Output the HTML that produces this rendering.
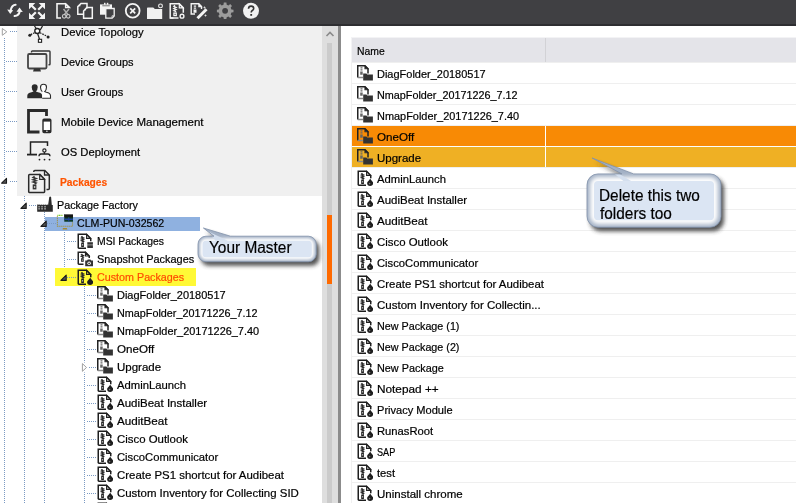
<!DOCTYPE html>
<html><head><meta charset="utf-8"><title>Package Factory</title>
<style>
html,body{margin:0;padding:0;}
body{width:796px;height:503px;overflow:hidden;position:relative;background:#fff;font-family:"Liberation Sans", sans-serif;}
.a{position:absolute;}
.t{position:absolute;white-space:nowrap;line-height:1;-webkit-text-stroke:0.2px currentColor;}
.dv{position:absolute;width:1px;background-image:linear-gradient(#7b9ac3 50%,transparent 50%);background-size:1px 2px;}
.dh{position:absolute;height:1px;background-image:linear-gradient(90deg,#7b9ac3 50%,transparent 50%);background-size:2px 1px;}
svg.i{position:absolute;overflow:visible;}
</style></head><body>


<svg width="0" height="0" style="position:absolute">
<defs>
<symbol id="zipdoc" viewBox="0 0 16 16">
  <path d="M1.25 15.25V1.25H9.5L13.75 5.5V8.3" fill="none" stroke="#1e1e1e" stroke-width="1.5"/>
  <path d="M1.25 15.25H9" fill="none" stroke="#1e1e1e" stroke-width="1.5"/>
  <path d="M9.6 1.6V5.4H13.4Z" fill="#e8e8e8" stroke="#1e1e1e" stroke-width="1.1"/>
  <path d="M5.5 3.2L4.6 4.1L6.5 5L4.6 5.9L6.5 6.8L4.6 7.7L6.5 8.6L5.5 9.4" fill="none" stroke="#2a2a2a" stroke-width="1.4"/>
  <rect x="4.2" y="9.6" width="2.7" height="4.4" fill="#222"/>
  <rect x="5" y="11.3" width="1.1" height="1.1" fill="#ddd"/>
</symbol>
<symbol id="pkgdrop" viewBox="0 0 16 16">
  <use href="#zipdoc"/>
  <path d="M13.2 8.4C12.6 10.1 10.1 11.7 10.1 12.9A3.05 3.05 0 0 0 16.2 12.9C16.2 11.7 13.8 10.1 13.2 8.4Z" fill="#1e1e1e"/>
  <circle cx="12.6" cy="13.6" r="0.8" fill="#777"/>
</symbol>
<symbol id="pkgfolder" viewBox="0 0 16 16">
  <path d="M0.75 12.5V0.75H8L11 3.75V8.5" fill="none" stroke="#222" stroke-width="1.5"/>
  <path d="M0.75 12.5H6" fill="none" stroke="#888" stroke-width="1.5"/>
  <path d="M8 0.9V3.8H10.9Z" fill="#fff" stroke="#222" stroke-width="1.1"/>
  <path d="M3.5 2.3h2v1.2h-2zM3.5 4.3h2v1.2h-2zM3.2 6.5h2.5v3.2h-2.5z" fill="#666"/>
  <path d="M6.2 8.6H9.4L10.2 9.6H15.9V15.6H6.2Z" fill="#333"/>
</symbol>
<symbol id="pkgmsi" viewBox="0 0 16 16">
  <use href="#zipdoc"/>
  <rect x="10.3" y="9.2" width="5.6" height="2.5" fill="#333"/>
  <rect x="10.3" y="12.2" width="5.6" height="2.8" fill="#333"/>
</symbol>
<symbol id="pkgsnap" viewBox="0 0 16 16">
  <path d="M1.25 13.25V1.25H8.5L12.25 5V7" fill="none" stroke="#222" stroke-width="1.5"/>
  <path d="M1.25 13.25H6.5" fill="none" stroke="#222" stroke-width="1.5"/>
  <path d="M8.5 1.5V5H12Z" fill="#fff" stroke="#222" stroke-width="1.2"/>
  <path d="M5.4 3L4.5 3.8L6.3 4.6L4.5 5.4L6.3 6.2L5.4 7" fill="none" stroke="#2a2a2a" stroke-width="1.3"/><rect x="4.1" y="7.2" width="2.6" height="3.6" fill="#222"/><rect x="4.9" y="8.6" width="1" height="1" fill="#ddd"/>
  <path d="M8.2 9.5H10L10.8 8.6H13.4L14.2 9.5H16V15.2H8.2Z" fill="#333"/>
  <circle cx="12.1" cy="12.3" r="1.7" fill="#fff"/>
  <circle cx="12.1" cy="12.3" r="0.9" fill="#333"/>
</symbol>
<symbol id="pkgcustom" viewBox="0 0 16 16">
  <path d="M1.25 15.25V1.25H9.5L13.75 5.5V8.3" fill="none" stroke="#1e1e1e" stroke-width="1.5"/>
  <path d="M1.25 15.25H9" fill="none" stroke="#1e1e1e" stroke-width="1.5"/>
  <path d="M9.6 1.6V5.4H13.4Z" fill="none" stroke="#1e1e1e" stroke-width="1.1"/>
  <path d="M5.5 3.2L4.6 4.1L6.5 5L4.6 5.9L6.5 6.8L4.6 7.7L6.5 8.6L5.5 9.4" fill="none" stroke="#2a2a2a" stroke-width="1.4"/>
  <rect x="4.2" y="9.6" width="2.7" height="4.4" fill="#222"/>
  <rect x="5" y="11.3" width="1.1" height="1.1" fill="#ddd"/>
  <path d="M13.2 8.4C12.6 10.1 10.1 11.7 10.1 12.9A3.05 3.05 0 0 0 16.2 12.9C16.2 11.7 13.8 10.1 13.2 8.4Z" fill="#1e1e1e"/>
</symbol>
</defs>
</svg>

<div class="a" style="left:17px;top:26px;width:305px;height:170px;background:#f0f0f0"></div>
<div class="dv" style="left:4px;top:26px;height:477px"></div>
<div class="dh" style="left:6px;top:31px;width:11px"></div>
<div class="dh" style="left:6px;top:61px;width:11px"></div>
<div class="dh" style="left:6px;top:91px;width:11px"></div>
<div class="dh" style="left:6px;top:121px;width:11px"></div>
<div class="dh" style="left:6px;top:151px;width:11px"></div>
<div class="dh" style="left:6px;top:181px;width:11px"></div>
<svg class="i" style="left:0;top:26px" width="10" height="12"><rect x="0" y="0" width="9" height="11" fill="#fff"/><path d="M2.3 2.5L6.8 5.8L2.3 9.3Z" fill="#fff" stroke="#a0a0a0" stroke-width="1"/></svg>
<svg class="i" style="left:0;top:176px" width="10" height="10"><rect x="0" y="0.5" width="9" height="9" fill="#fff"/><path d="M1.6 7.2H6.5V2.4Z" fill="#555" stroke="#1a1a1a" stroke-width="1.1" stroke-linejoin="round"/></svg>
<div class="t" style="left:61.00px;top:26.84px;font-size:11px;color:#000;font-weight:normal;transform:scaleX(1.0269);transform-origin:0 0;">Device Topology</div>
<div class="t" style="left:61.00px;top:56.84px;font-size:11px;color:#000;font-weight:normal;transform:scaleX(0.9966);transform-origin:0 0;">Device Groups</div>
<div class="t" style="left:61.00px;top:86.84px;font-size:11px;color:#000;font-weight:normal;transform:scaleX(0.9976);transform-origin:0 0;">User Groups</div>
<div class="t" style="left:61.00px;top:116.84px;font-size:11px;color:#000;font-weight:normal;transform:scaleX(1.0456);transform-origin:0 0;">Mobile Device Management</div>
<div class="t" style="left:61.00px;top:146.84px;font-size:11px;color:#000;font-weight:normal;transform:scaleX(1.0195);transform-origin:0 0;">OS Deployment</div>
<div class="t" style="left:60.20px;top:176.84px;font-size:11px;color:#ff5500;font-weight:bold;transform:scaleX(0.9300);transform-origin:0 0;">Packages</div>
<svg class="i" style="left:26px;top:26px" width="26" height="18" viewBox="0 0 26 18">
<path d="M8.5 0L11.3 4M14.2 4L16.5 0" stroke="#222" stroke-width="1.3"/>
<circle cx="11.3" cy="5" r="2.5" fill="#fff" stroke="#222" stroke-width="1.4"/>
<path d="M8.5 6.7L4 9M14 6.7L22 10.8" stroke="#222" stroke-width="1.2" stroke-dasharray="1.6 1"/>
<circle cx="3.8" cy="9.3" r="1.5" fill="#222"/><circle cx="22.1" cy="11" r="1.5" fill="#222"/>
<path d="M11.6 7.5L13.6 13.5" stroke="#222" stroke-width="1.2"/>
<rect x="12.4" y="13.3" width="3.2" height="3" fill="#fff" stroke="#222" stroke-width="1.1"/>
</svg>
<svg class="i" style="left:26px;top:50px" width="26" height="24" viewBox="0 0 26 24">
<path d="M5.5 2.5V1.8Q5.5 1 6.3 1H23.2Q24 1 24 1.8V14Q24 14.8 23.2 14.8H22.5" fill="none" stroke="#333" stroke-width="1.4"/>
<rect x="2" y="4" width="18.5" height="14.5" rx="1.2" fill="#f0f0f0" stroke="#444" stroke-width="1.8"/>
<path d="M8 18.5H14L15 21.5H7Z" fill="#333"/>
</svg>
<svg class="i" style="left:26px;top:82px" width="26" height="18" viewBox="0 0 26 18">
<path d="M1.3 16.2V13.8Q1.3 11 5.5 10.2L7.5 9.6Q5.8 8 5.7 5.2Q5.7 2.2 8.7 2.2Q11.7 2.2 11.7 5.2Q11.6 8 9.9 9.6L12 10.2Q16.2 11 16.2 13.8V16.2Z" fill="#2a2a2a"/>
<path d="M16.2 16.2H24.5V13.8Q24.5 11 20.3 10.2L18.7 9.6Q20.4 8 20.5 5.2Q20.5 2.2 17.5 2.2Q14.5 2.2 14.5 5.2Q14.6 8 16.3 9.6" fill="#fff" stroke="#2a2a2a" stroke-width="1.1"/>
</svg>
<svg class="i" style="left:26px;top:108px" width="26" height="26" viewBox="0 0 26 26">
<path d="M13.5 24H2.5V2.5H20.5V8" fill="none" stroke="#2a2a2a" stroke-width="2.8"/>
<rect x="17" y="11.3" width="7.8" height="13.2" rx="1" fill="#fff" stroke="#2a2a2a" stroke-width="1.4"/>
<rect x="17" y="11.3" width="7.8" height="2.3" fill="#2a2a2a"/><rect x="17" y="22" width="7.8" height="2.5" fill="#2a2a2a"/>
<circle cx="20.9" cy="23.2" r="0.7" fill="#fff"/>
</svg>
<svg class="i" style="left:26px;top:140px" width="26" height="24" viewBox="0 0 26 24">
<path d="M4.5 14V2H21.5V6" fill="none" stroke="#222" stroke-width="1.5"/>
<path d="M1 14.6H11" stroke="#222" stroke-width="1.8"/>
<circle cx="18.4" cy="10.4" r="1.6" fill="#fff" stroke="#222" stroke-width="1.2"/>
<path d="M13 16.3Q13 14 15 14H22Q24 14 24 16.3" fill="none" stroke="#222" stroke-width="1.3"/>
<path d="M18.4 12V14" stroke="#222" stroke-width="1.2"/>
<circle cx="13.5" cy="19.6" r="0.9" fill="#222"/><circle cx="18.5" cy="19.6" r="0.9" fill="#222"/><circle cx="23.5" cy="19.6" r="0.9" fill="#222"/>
</svg>
<svg class="i" style="left:26px;top:168px" width="26" height="26" viewBox="0 0 26 26">
<path d="M7.8 4V3.5Q7.8 2.5 8.8 2.5H18.8L23.3 7V20.5Q23.3 21.5 22.3 21.5H20.5" fill="none" stroke="#2a2a2a" stroke-width="1.5"/>
<path d="M18.5 2.8V7H23" fill="none" stroke="#2a2a2a" stroke-width="1.3"/>
<path d="M3.3 24.5Q2.7 24.5 2.7 23.8V7.5Q2.7 6.6 3.6 6.6H14L18.6 11.2V23.8Q18.6 24.5 17.9 24.5Z" fill="#f0f0f0" stroke="#2a2a2a" stroke-width="1.5"/>
<path d="M13.7 6.9V11.3H18.3Z" fill="#fff" stroke="#2a2a2a" stroke-width="1.2"/>
<path d="M8.6 8.4L7 9.5L10.2 10.6L7 11.7L10.2 12.8L7 13.9L10.2 15L8.6 16.1" fill="none" stroke="#333" stroke-width="1.4"/><rect x="6.7" y="16.4" width="3.7" height="5" fill="#333"/><rect x="7.9" y="18.3" width="1.4" height="1.4" fill="#f0f0f0"/>
</svg>
<div class="a" style="left:322px;top:26px;width:16px;height:477px;background:#dedede"></div>
<div class="a" style="left:327px;top:43px;width:5px;height:460px;background:#cbcbcb"></div>
<div class="a" style="left:327px;top:215px;width:5px;height:69px;background:#ff6a00"></div>
<svg class="i" style="left:322px;top:26px" width="16" height="16"><path d="M4.5 10L8 6.5L11.5 10" fill="none" stroke="#8a8a8a" stroke-width="1.6"/></svg>
<div class="a" style="left:338px;top:26px;width:3px;height:477px;background:#8c8c8c"></div>
<div class="dv" style="left:24px;top:196px;height:307px"></div>
<div class="dv" style="left:44px;top:212px;height:291px"></div>
<div class="dv" style="left:64px;top:230px;height:47px"></div>
<div class="dv" style="left:84px;top:286px;height:217px"></div>
<div class="a" style="left:45px;top:217px;width:155px;height:14px;background:#8fb1e0"></div>
<div class="a" style="left:55px;top:268px;width:141px;height:18px;background:#fff936"></div>
<div class="dh" style="left:27px;top:205px;width:10px"></div>
<svg class="i" style="left:19.4px;top:200.5px" width="10" height="10"><rect x="0.5" y="1" width="9" height="8" fill="#fff"/><path d="M1.9 7.4H7.2V2.1Z" fill="#555" stroke="#1a1a1a" stroke-width="1.1" stroke-linejoin="round"/></svg>
<svg class="i" style="left:37px;top:196px" width="16" height="16" viewBox="0 0 16 16">
<path d="M0.2 15.8V8.9Q0.8 7.6 1.5 8.9Q2.1 7.6 2.8 8.9 L3.5 8.9Q4.1 7.6 4.8 8.9L5.5 8.9Q6.1 7.6 6.8 8.9L7.5 8.9Q8.1 7.6 8.8 8.9L9.5 8.9Q10.1 7.6 10.8 8.9L11.1 8.9L12.3 1Q13.2 -0.2 14.1 1L14.8 8.9H15.8V15.8Z" fill="#2b2b2b"/>
<rect x="1.2" y="9.9" width="1.9" height="1.6" fill="#8a8a8a"/><rect x="4.1" y="9.9" width="1.9" height="1.6" fill="#8a8a8a"/><rect x="7.1" y="9.9" width="1.9" height="1.6" fill="#8a8a8a"/>
<rect x="1.2" y="12" width="1.9" height="1.6" fill="#8a8a8a"/><rect x="4.1" y="12" width="1.9" height="1.6" fill="#8a8a8a"/><rect x="7.1" y="12" width="1.9" height="1.6" fill="#8a8a8a"/>
</svg>
<div class="t" style="left:56.70px;top:199.84px;font-size:11px;color:#000;font-weight:normal;transform:scaleX(0.9815);transform-origin:0 0;">Package Factory</div>
<div class="dh" style="left:47px;top:223px;width:10px"></div>
<svg class="i" style="left:39.4px;top:218.5px" width="10" height="10"><rect x="0.5" y="1" width="4.8" height="8" fill="#fff"/><path d="M1.9 7.4H7.2V2.1Z" fill="#555" stroke="#1a1a1a" stroke-width="1.1" stroke-linejoin="round"/></svg>
<svg class="i" style="left:57px;top:213px" width="18" height="18" viewBox="0 0 18 18">
<path d="M0.4 3.2V13.3H15.5V8.5" fill="none" stroke="#a08a2a" stroke-width="1.1" stroke-dasharray="1.1 0.9"/>
<path d="M0.4 2.4H5.7" fill="none" stroke="#7ccc20" stroke-width="1.1" stroke-dasharray="1.1 0.5"/>
<path d="M5.9 15H9.9L10.3 16.6H5.6Z" fill="#a88a30"/>
<rect x="7.3" y="1.1" width="8.7" height="7.6" fill="#0c3a1c"/>
<rect x="7.3" y="1.1" width="8.7" height="3.2" fill="#151515"/>
<rect x="7.3" y="1" width="8.7" height="0.7" fill="#888"/>
<rect x="7.3" y="5.5" width="8.7" height="1.6" fill="#1c3f9a"/>
<rect x="11.3" y="4.3" width="1" height="4.4" fill="#1c3f9a"/>
</svg>
<div class="t" style="left:76.70px;top:217.84px;font-size:11px;color:#000;font-weight:normal;transform:scaleX(0.9639);transform-origin:0 0;">CLM-PUN-032562</div>
<div class="dh" style="left:67px;top:241px;width:10px"></div>
<svg class="i" style="left:77px;top:233px" width="16" height="16"><use href="#pkgmsi"/></svg>
<div class="t" style="left:96.70px;top:235.84px;font-size:11px;color:#000;font-weight:normal;transform:scaleX(0.9451);transform-origin:0 0;">MSI Packages</div>
<div class="dh" style="left:67px;top:259px;width:10px"></div>
<svg class="i" style="left:77px;top:251px" width="16" height="16"><use href="#pkgsnap"/></svg>
<div class="t" style="left:96.70px;top:253.84px;font-size:11px;color:#000;font-weight:normal;transform:scaleX(0.9934);transform-origin:0 0;">Snapshot Packages</div>
<div class="dh" style="left:67px;top:277px;width:10px"></div>
<svg class="i" style="left:59.400000000000006px;top:272.5px" width="10" height="10"><rect x="0.5" y="1" width="0" height="8" fill="#fff"/><path d="M1.9 7.4H7.2V2.1Z" fill="#555" stroke="#1a1a1a" stroke-width="1.1" stroke-linejoin="round"/></svg>
<svg class="i" style="left:77px;top:269px" width="16" height="16"><use href="#pkgcustom"/></svg>
<div class="t" style="left:96.70px;top:271.85px;font-size:11px;color:#ff4a00;font-weight:normal;transform:scaleX(0.9759);transform-origin:0 0;">Custom Packages</div>
<div class="dh" style="left:87px;top:295px;width:10px"></div>
<svg class="i" style="left:97px;top:286px" width="16" height="16"><use href="#pkgfolder"/></svg>
<div class="t" style="left:116.70px;top:289.85px;font-size:11px;color:#000;font-weight:normal;transform:scaleX(0.9978);transform-origin:0 0;">DiagFolder_20180517</div>
<div class="dh" style="left:87px;top:313px;width:10px"></div>
<svg class="i" style="left:97px;top:304px" width="16" height="16"><use href="#pkgfolder"/></svg>
<div class="t" style="left:116.70px;top:307.85px;font-size:11px;color:#000;font-weight:normal;transform:scaleX(0.9826);transform-origin:0 0;">NmapFolder_20171226_7.12</div>
<div class="dh" style="left:87px;top:331px;width:10px"></div>
<svg class="i" style="left:97px;top:322px" width="16" height="16"><use href="#pkgfolder"/></svg>
<div class="t" style="left:116.70px;top:325.85px;font-size:11px;color:#000;font-weight:normal;transform:scaleX(0.9931);transform-origin:0 0;">NmapFolder_20171226_7.40</div>
<div class="dh" style="left:87px;top:349px;width:10px"></div>
<svg class="i" style="left:97px;top:340px" width="16" height="16"><use href="#pkgfolder"/></svg>
<div class="t" style="left:116.70px;top:343.85px;font-size:11px;color:#000;font-weight:normal;transform:scaleX(1.0551);transform-origin:0 0;">OneOff</div>
<div class="dh" style="left:87px;top:367px;width:10px"></div>
<svg class="i" style="left:79.4px;top:361.5px" width="10" height="11"><rect x="1" y="0.5" width="8" height="10" fill="#fff"/><path d="M3.4 1.6L7.5 5.5L3.4 9.3Z" fill="#fff" stroke="#a0a0a0" stroke-width="1"/></svg>
<svg class="i" style="left:97px;top:358px" width="16" height="16"><use href="#pkgfolder"/></svg>
<div class="t" style="left:116.70px;top:361.85px;font-size:11px;color:#000;font-weight:normal;transform:scaleX(1.0457);transform-origin:0 0;">Upgrade</div>
<div class="dh" style="left:87px;top:385px;width:10px"></div>
<svg class="i" style="left:97px;top:376px" width="16" height="16"><use href="#pkgdrop"/></svg>
<div class="t" style="left:116.70px;top:379.85px;font-size:11px;color:#000;font-weight:normal;transform:scaleX(1.0246);transform-origin:0 0;">AdminLaunch</div>
<div class="dh" style="left:87px;top:403px;width:10px"></div>
<svg class="i" style="left:97px;top:394px" width="16" height="16"><use href="#pkgdrop"/></svg>
<div class="t" style="left:116.70px;top:397.85px;font-size:11px;color:#000;font-weight:normal;transform:scaleX(1.0456);transform-origin:0 0;">AudiBeat Installer</div>
<div class="dh" style="left:87px;top:421px;width:10px"></div>
<svg class="i" style="left:97px;top:412px" width="16" height="16"><use href="#pkgdrop"/></svg>
<div class="t" style="left:116.70px;top:415.85px;font-size:11px;color:#000;font-weight:normal;transform:scaleX(1.0599);transform-origin:0 0;">AuditBeat</div>
<div class="dh" style="left:87px;top:439px;width:10px"></div>
<svg class="i" style="left:97px;top:430px" width="16" height="16"><use href="#pkgdrop"/></svg>
<div class="t" style="left:116.70px;top:433.85px;font-size:11px;color:#000;font-weight:normal;transform:scaleX(1.0367);transform-origin:0 0;">Cisco Outlook</div>
<div class="dh" style="left:87px;top:457px;width:10px"></div>
<svg class="i" style="left:97px;top:448px" width="16" height="16"><use href="#pkgdrop"/></svg>
<div class="t" style="left:116.70px;top:451.85px;font-size:11px;color:#000;font-weight:normal;transform:scaleX(1.0215);transform-origin:0 0;">CiscoCommunicator</div>
<div class="dh" style="left:87px;top:475px;width:10px"></div>
<svg class="i" style="left:97px;top:466px" width="16" height="16"><use href="#pkgdrop"/></svg>
<div class="t" style="left:116.70px;top:469.85px;font-size:11px;color:#000;font-weight:normal;transform:scaleX(1.0380);transform-origin:0 0;">Create PS1 shortcut for Audibeat</div>
<div class="dh" style="left:87px;top:493px;width:10px"></div>
<svg class="i" style="left:97px;top:484px" width="16" height="16"><use href="#pkgdrop"/></svg>
<div class="t" style="left:116.70px;top:487.85px;font-size:11px;color:#000;font-weight:normal;transform:scaleX(1.0400);transform-origin:0 0;">Custom Inventory for Collecting SID</div>
<div class="dh" style="left:87px;top:511px;width:10px"></div>
<svg class="i" style="left:97px;top:502px" width="16" height="16"><use href="#pkgdrop"/></svg>
<div class="t" style="left:116.70px;top:505.84px;font-size:11px;color:#000;font-weight:normal;transform:scaleX(0.9820);transform-origin:0 0;">New Package (1)</div>
<div class="a" style="left:0;top:0;width:796px;height:24px;background:#404043"></div>
<div class="a" style="left:0;top:24px;width:796px;height:2px;background:#2e2e31"></div>
<svg class="i" style="left:0;top:0" width="270" height="24" viewBox="0 0 270 24">
<g fill="#f4f4f4" stroke="none">
<path d="M15.6 4.8Q12 5 10.8 9.8" fill="none" stroke="#f4f4f4" stroke-width="2" stroke-linecap="round"/>
<path d="M7.2 9.6L13.2 10.2L10.2 14Z"/>
<path d="M14.6 16.1Q19 15.5 19.8 11.2" fill="none" stroke="#f4f4f4" stroke-width="2" stroke-linecap="round"/>
<path d="M16.5 11.8L22.8 11.9L19.5 7.4Z"/>
<path d="M29 3H35.3L29 9.3Z M45 3H38.7L45 9.3Z M29 19V12.7L35.3 19Z M45 19V12.7L38.7 19Z"/>
<path d="M31 5L35.8 9.8M43 5L38.2 9.8M31 17L35.8 12.2M43 17L38.2 12.2" stroke="#f4f4f4" stroke-width="2.2"/>
</g>
<g fill="none" stroke="#f4f4f4">
<path d="M61 18H57V3.8H65.6L69.6 7.8" stroke-width="1.6"/>
<path d="M65.6 4V7.5H69.4Z" stroke-width="1.4"/>
<path d="M63.5 9L68.3 15M69 9L64 15" stroke="#b0b0b0" stroke-width="1.4"/>
<circle cx="64.2" cy="16.3" r="1.8" stroke="#c8c8c8" stroke-width="1.2"/>
<circle cx="68.2" cy="16.3" r="1.8" stroke="#c8c8c8" stroke-width="1.2"/>
<path d="M87 8.5V3.4H81L77.8 6.6V14.2H83.4" stroke-width="1.5"/>
<path d="M83.6 11L86.8 7.6H92.3V18.2H83.6Z" stroke-width="1.5"/>
<circle cx="79.8" cy="5.7" r="0.7" fill="#f4f4f4" stroke="none"/><circle cx="85.5" cy="9.7" r="0.7" fill="#f4f4f4" stroke="none"/>
</g>
<g>
<rect x="100" y="4.4" width="12" height="10.3" fill="#f4f4f4"/>
<rect x="102.3" y="4.6" width="7.5" height="1.8" fill="#9a9a9a"/>
<rect x="104" y="2.8" width="1.5" height="2" fill="#f4f4f4"/><rect x="106.8" y="2.8" width="1.5" height="2" fill="#f4f4f4"/>
<path d="M105.8 8.5H114.2V16L112.2 18.2H105.8Z" fill="#404043" stroke="#f4f4f4" stroke-width="1.3"/>
<path d="M112 18V15.8H114" fill="none" stroke="#cfcfcf" stroke-width="1"/>
<circle cx="132.7" cy="10.8" r="6.9" fill="none" stroke="#f4f4f4" stroke-width="1.8"/>
<path d="M130.2 8.3L135.2 13.3M135.2 8.3L130.2 13.3" stroke="#f4f4f4" stroke-width="1.7"/>
<path d="M147 18.9V8.2Q147 7.4 147.8 7.4H153.3L154.8 9.1H162.2V18.9Z" fill="#f0f0f0"/>
<circle cx="160.5" cy="5.9" r="1.9" fill="none" stroke="#f0f0f0" stroke-width="1.1"/>
<path d="M173.5 18H170.2V3.8H179.3L183.3 7.8V12.8" fill="none" stroke="#f4f4f4" stroke-width="1.5"/>
<path d="M179.3 4V7.8H183Z" fill="none" stroke="#f4f4f4" stroke-width="1.2"/>
<path d="M170.2 18H178.5" stroke="#f4f4f4" stroke-width="1.5"/>
<path d="M175 5.2L173.8 6.3L176.2 7.4L173.8 8.5L176.2 9.6L173.8 10.7L176.2 11.8" fill="none" stroke="#f4f4f4" stroke-width="1.2"/><rect x="173.3" y="12.4" width="3.6" height="3.8" fill="#f4f4f4"/><rect x="174.5" y="13.8" width="1.2" height="1.1" fill="#404043"/>
<circle cx="182" cy="16.2" r="1.9" fill="none" stroke="#f4f4f4" stroke-width="1.4"/>
<path d="M195 14H191.2V3.8H198.8L201.5 6.5V9" fill="none" stroke="#f4f4f4" stroke-width="1.4"/>
<path d="M198.8 4V6.6H201.3Z" fill="none" stroke="#f4f4f4" stroke-width="1.1"/>
<path d="M193.8 5.5h2.3v1.2h-2.3zM193.8 7.5h2.3v1.2h-2.3zM193.5 9.6h3v3.2h-3z" fill="#f4f4f4"/>
<path d="M197.5 18.3L206.5 9.3" stroke="#f4f4f4" stroke-width="3"/>
<path d="M204.5 6.5V8.5M203.5 7.5H205.5M205.5 14.5V16.5M204.5 15.5H206.5" stroke="#dcdcdc" stroke-width="0.9"/>
</g>
<g transform="translate(225.1 10.8)" fill="#9c9c9c">
<path d="M-1.3 -8H1.3L1.6 -5.8L3.4 -5.1L5.1 -6.4L6.9 -4.6L5.6 -2.9L6.3 -1.1L8.4 -0.8V1.8L6.3 2.1L5.6 3.9L6.9 5.6L5.1 7.4L3.4 6.1L1.6 6.8L1.3 8.6H-1.3L-1.6 6.8L-3.4 6.1L-5.1 7.4L-6.9 5.6L-5.6 3.9L-6.3 2.1L-8.2 1.8V-0.8L-6.3 -1.1L-5.6 -2.9L-6.9 -4.6L-5.1 -6.4L-3.4 -5.1L-1.6 -5.8Z" transform="translate(0 -0.3)"/>
<circle r="2.9" fill="#404043"/>
</g>
<circle cx="251" cy="10.8" r="8" fill="#f2f2f2"/>
<path d="M248.5 8.7Q248.6 6.1 251.1 6.1Q253.7 6.1 253.7 8.4Q253.7 9.7 252.3 10.5Q251.2 11.2 251.2 12.6" fill="none" stroke="#333" stroke-width="1.6"/><rect x="250.3" y="14" width="1.8" height="1.8" fill="#333"/>
</svg>
<div class="a" style="left:351px;top:37px;width:445px;height:25px;background:#f3f3f5"></div>
<div class="a" style="left:352px;top:38px;width:444px;height:24px;background:#e4e4e9"></div>
<div class="a" style="left:545px;top:38px;width:1px;height:24px;background:#d2d2d6"></div>
<div class="t" style="left:356.90px;top:45.75px;font-size:11px;color:#000;font-weight:normal;transform:scaleX(0.9444);transform-origin:0 0;">Name</div>
<div class="a" style="left:351px;top:62px;width:1px;height:441px;background:#f0f0f0"></div>
<div class="a" style="left:352px;top:62px;width:444px;height:1px;background:#efefef"></div>
<svg class="i" style="left:357px;top:65px" width="16" height="16"><use href="#pkgfolder"/></svg>
<div class="t" style="left:377.10px;top:68.55px;font-size:11px;color:#000;font-weight:normal;transform:scaleX(0.9978);transform-origin:0 0;">DiagFolder_20180517</div>
<div class="a" style="left:352px;top:83px;width:444px;height:1px;background:#efefef"></div>
<svg class="i" style="left:357px;top:86px" width="16" height="16"><use href="#pkgfolder"/></svg>
<div class="t" style="left:377.10px;top:89.55px;font-size:11px;color:#000;font-weight:normal;transform:scaleX(0.9826);transform-origin:0 0;">NmapFolder_20171226_7.12</div>
<div class="a" style="left:352px;top:104px;width:444px;height:1px;background:#efefef"></div>
<svg class="i" style="left:357px;top:107px" width="16" height="16"><use href="#pkgfolder"/></svg>
<div class="t" style="left:377.10px;top:110.55px;font-size:11px;color:#000;font-weight:normal;transform:scaleX(0.9931);transform-origin:0 0;">NmapFolder_20171226_7.40</div>
<div class="a" style="left:352px;top:125px;width:444px;height:1px;background:#efefef"></div>
<div class="a" style="left:352px;top:126px;width:444px;height:20px;background:#f88a05"></div>
<div class="a" style="left:545px;top:126px;width:1px;height:20px;background:#fff"></div>
<svg class="i" style="left:357px;top:128px" width="16" height="16"><use href="#pkgfolder"/></svg>
<div class="t" style="left:377.10px;top:131.54px;font-size:11px;color:#000;font-weight:normal;transform:scaleX(1.0551);transform-origin:0 0;">OneOff</div>
<div class="a" style="left:352px;top:146px;width:444px;height:1px;background:#fdfdfd"></div>
<div class="a" style="left:352px;top:147px;width:444px;height:20px;background:#efb024"></div>
<div class="a" style="left:545px;top:147px;width:1px;height:20px;background:#fff"></div>
<svg class="i" style="left:357px;top:149px" width="16" height="16"><use href="#pkgfolder"/></svg>
<div class="t" style="left:377.10px;top:152.54px;font-size:11px;color:#000;font-weight:normal;transform:scaleX(1.0457);transform-origin:0 0;">Upgrade</div>
<div class="a" style="left:352px;top:167px;width:444px;height:1px;background:#efefef"></div>
<svg class="i" style="left:357px;top:170px" width="16" height="16"><use href="#pkgdrop"/></svg>
<div class="t" style="left:377.10px;top:173.54px;font-size:11px;color:#000;font-weight:normal;transform:scaleX(1.0246);transform-origin:0 0;">AdminLaunch</div>
<div class="a" style="left:352px;top:188px;width:444px;height:1px;background:#efefef"></div>
<svg class="i" style="left:357px;top:191px" width="16" height="16"><use href="#pkgdrop"/></svg>
<div class="t" style="left:377.10px;top:194.54px;font-size:11px;color:#000;font-weight:normal;transform:scaleX(1.0456);transform-origin:0 0;">AudiBeat Installer</div>
<div class="a" style="left:352px;top:209px;width:444px;height:1px;background:#efefef"></div>
<svg class="i" style="left:357px;top:212px" width="16" height="16"><use href="#pkgdrop"/></svg>
<div class="t" style="left:377.10px;top:215.54px;font-size:11px;color:#000;font-weight:normal;transform:scaleX(1.0599);transform-origin:0 0;">AuditBeat</div>
<div class="a" style="left:352px;top:230px;width:444px;height:1px;background:#efefef"></div>
<svg class="i" style="left:357px;top:233px" width="16" height="16"><use href="#pkgdrop"/></svg>
<div class="t" style="left:377.10px;top:236.54px;font-size:11px;color:#000;font-weight:normal;transform:scaleX(1.0367);transform-origin:0 0;">Cisco Outlook</div>
<div class="a" style="left:352px;top:251px;width:444px;height:1px;background:#efefef"></div>
<svg class="i" style="left:357px;top:254px" width="16" height="16"><use href="#pkgdrop"/></svg>
<div class="t" style="left:377.10px;top:257.55px;font-size:11px;color:#000;font-weight:normal;transform:scaleX(1.0215);transform-origin:0 0;">CiscoCommunicator</div>
<div class="a" style="left:352px;top:272px;width:444px;height:1px;background:#efefef"></div>
<svg class="i" style="left:357px;top:275px" width="16" height="16"><use href="#pkgdrop"/></svg>
<div class="t" style="left:377.10px;top:278.55px;font-size:11px;color:#000;font-weight:normal;transform:scaleX(1.0380);transform-origin:0 0;">Create PS1 shortcut for Audibeat</div>
<div class="a" style="left:352px;top:293px;width:444px;height:1px;background:#efefef"></div>
<svg class="i" style="left:357px;top:296px" width="16" height="16"><use href="#pkgdrop"/></svg>
<div class="t" style="left:377.10px;top:299.55px;font-size:11px;color:#000;font-weight:normal;transform:scaleX(1.0464);transform-origin:0 0;">Custom Inventory for Collectin...</div>
<div class="a" style="left:352px;top:314px;width:444px;height:1px;background:#efefef"></div>
<svg class="i" style="left:357px;top:317px" width="16" height="16"><use href="#pkgdrop"/></svg>
<div class="t" style="left:377.10px;top:320.55px;font-size:11px;color:#000;font-weight:normal;transform:scaleX(0.9772);transform-origin:0 0;">New Package (1)</div>
<div class="a" style="left:352px;top:335px;width:444px;height:1px;background:#efefef"></div>
<svg class="i" style="left:357px;top:338px" width="16" height="16"><use href="#pkgdrop"/></svg>
<div class="t" style="left:377.10px;top:341.55px;font-size:11px;color:#000;font-weight:normal;transform:scaleX(0.9772);transform-origin:0 0;">New Package (2)</div>
<div class="a" style="left:352px;top:356px;width:444px;height:1px;background:#efefef"></div>
<svg class="i" style="left:357px;top:359px" width="16" height="16"><use href="#pkgdrop"/></svg>
<div class="t" style="left:377.10px;top:362.55px;font-size:11px;color:#000;font-weight:normal;transform:scaleX(0.9845);transform-origin:0 0;">New Package</div>
<div class="a" style="left:352px;top:377px;width:444px;height:1px;background:#efefef"></div>
<svg class="i" style="left:357px;top:380px" width="16" height="16"><use href="#pkgdrop"/></svg>
<div class="t" style="left:377.10px;top:383.55px;font-size:11px;color:#000;font-weight:normal;transform:scaleX(1.0724);transform-origin:0 0;">Notepad ++</div>
<div class="a" style="left:352px;top:398px;width:444px;height:1px;background:#efefef"></div>
<svg class="i" style="left:357px;top:401px" width="16" height="16"><use href="#pkgdrop"/></svg>
<div class="t" style="left:377.10px;top:404.55px;font-size:11px;color:#000;font-weight:normal;transform:scaleX(1.0056);transform-origin:0 0;">Privacy Module</div>
<div class="a" style="left:352px;top:419px;width:444px;height:1px;background:#efefef"></div>
<svg class="i" style="left:357px;top:422px" width="16" height="16"><use href="#pkgdrop"/></svg>
<div class="t" style="left:377.10px;top:425.55px;font-size:11px;color:#000;font-weight:normal;transform:scaleX(1.0204);transform-origin:0 0;">RunasRoot</div>
<div class="a" style="left:352px;top:440px;width:444px;height:1px;background:#efefef"></div>
<svg class="i" style="left:357px;top:443px" width="16" height="16"><use href="#pkgdrop"/></svg>
<div class="t" style="left:377.10px;top:446.55px;font-size:11px;color:#000;font-weight:normal;transform:scaleX(0.8305);transform-origin:0 0;">SAP</div>
<div class="a" style="left:352px;top:461px;width:444px;height:1px;background:#efefef"></div>
<svg class="i" style="left:357px;top:464px" width="16" height="16"><use href="#pkgdrop"/></svg>
<div class="t" style="left:377.10px;top:467.55px;font-size:11px;color:#000;font-weight:normal;transform:scaleX(1.0185);transform-origin:0 0;">test</div>
<div class="a" style="left:352px;top:482px;width:444px;height:1px;background:#efefef"></div>
<svg class="i" style="left:357px;top:485px" width="16" height="16"><use href="#pkgdrop"/></svg>
<div class="t" style="left:377.10px;top:488.55px;font-size:11px;color:#000;font-weight:normal;transform:scaleX(1.0464);transform-origin:0 0;">Uninstall chrome</div>
<svg class="i" style="left:186px;top:221.5px" width="148.3" height="53.80000000000001"><defs><clipPath id="kc198"><path d="M20 14.199999999999989 L28 14.199999999999989 L17.400000000000006 6.0 L44.400000000000006 14.199999999999989 L122.30000000000001 14.199999999999989 A8 8 0 0 1 130.3 22.19999999999999 L130.3 31.79999999999999 A8 8 0 0 1 122.30000000000001 39.79999999999999 L20 39.79999999999999 A8 8 0 0 1 12 31.79999999999999 L12 22.19999999999999 A8 8 0 0 1 20 14.199999999999989 Z"/></clipPath><filter id="sc198" x="-20%" y="-30%" width="140%" height="160%"><feGaussianBlur stdDeviation="2"/></filter><filter id="bc198" x="-20%" y="-30%" width="140%" height="160%"><feGaussianBlur stdDeviation="1.35"/></filter><filter id="dc198" x="-20%" y="-30%" width="140%" height="160%"><feGaussianBlur stdDeviation="0.6"/></filter></defs><path d="M20 14.199999999999989 L28 14.199999999999989 L17.400000000000006 6.0 L44.400000000000006 14.199999999999989 L122.30000000000001 14.199999999999989 A8 8 0 0 1 130.3 22.19999999999999 L130.3 31.79999999999999 A8 8 0 0 1 122.30000000000001 39.79999999999999 L20 39.79999999999999 A8 8 0 0 1 12 31.79999999999999 L12 22.19999999999999 A8 8 0 0 1 20 14.199999999999989 Z" transform="translate(3 4)" fill="#333" opacity="0.85" filter="url(#sc198)"/><path d="M20 14.199999999999989 L28 14.199999999999989 L17.400000000000006 6.0 L44.400000000000006 14.199999999999989 L122.30000000000001 14.199999999999989 A8 8 0 0 1 130.3 22.19999999999999 L130.3 31.79999999999999 A8 8 0 0 1 122.30000000000001 39.79999999999999 L20 39.79999999999999 A8 8 0 0 1 12 31.79999999999999 L12 22.19999999999999 A8 8 0 0 1 20 14.199999999999989 Z" fill="#a3b1c5"/><g clip-path="url(#kc198)"><path d="M20.0 16.224999999999987 L122.30000000000001 16.224999999999987 A5.975 5.975 0 0 1 128.275 22.19999999999999 L128.275 31.79999999999999 A5.975 5.975 0 0 1 122.30000000000001 37.77499999999999 L20.0 37.77499999999999 A5.975 5.975 0 0 1 14.025 31.79999999999999 L14.025 22.19999999999999 A5.975 5.975 0 0 1 20.0 16.224999999999987 Z" fill="#ffffff" filter="url(#bc198)"/><path d="M20.0 18.69999999999999 L122.3 18.69999999999999 A3.5 3.5 0 0 1 125.8 22.19999999999999 L125.8 31.79999999999999 A3.5 3.5 0 0 1 122.3 35.29999999999999 L20.0 35.29999999999999 A3.5 3.5 0 0 1 16.5 31.79999999999999 L16.5 22.19999999999999 A3.5 3.5 0 0 1 20.0 18.69999999999999 Z" fill="#dbe5f3" filter="url(#dc198)"/><path d="M21.25 9.05 L29.5 18.69999999999999 L41.900000000000006 18.69999999999999 Z" fill="#d4dfee" filter="url(#dc198)"/></g><path d="M20 14.199999999999989 L28 14.199999999999989 L17.400000000000006 6.0 L44.400000000000006 14.199999999999989 L122.30000000000001 14.199999999999989 A8 8 0 0 1 130.3 22.19999999999999 L130.3 31.79999999999999 A8 8 0 0 1 122.30000000000001 39.79999999999999 L20 39.79999999999999 A8 8 0 0 1 12 31.79999999999999 L12 22.19999999999999 A8 8 0 0 1 20 14.199999999999989 Z" fill="none" stroke="#8091a9" stroke-width="0.8"/></svg>
<div class="t" style="left:208.50px;top:239.52px;font-size:16px;color:#000;font-weight:normal;transform:scaleX(0.9636);transform-origin:0 0;">Your Master</div>
<svg class="i" style="left:575.1px;top:151.9px" width="164" height="89.30000000000001"><defs><clipPath id="kc587.1"><path d="M23.0 21.900000000000006 L46.89999999999998 21.900000000000006 L17.100000000000023 6.0 L58.60000000000002 21.900000000000006 L135.0 21.900000000000006 A11 11 0 0 1 146.0 32.900000000000006 L146.0 64.30000000000001 A11 11 0 0 1 135.0 75.30000000000001 L23.0 75.30000000000001 A11 11 0 0 1 12.0 64.30000000000001 L12.0 32.900000000000006 A11 11 0 0 1 23.0 21.900000000000006 Z"/></clipPath><filter id="sc587.1" x="-20%" y="-30%" width="140%" height="160%"><feGaussianBlur stdDeviation="2"/></filter><filter id="bc587.1" x="-20%" y="-30%" width="140%" height="160%"><feGaussianBlur stdDeviation="2.10"/></filter><filter id="dc587.1" x="-20%" y="-30%" width="140%" height="160%"><feGaussianBlur stdDeviation="0.6"/></filter></defs><path d="M23.0 21.900000000000006 L46.89999999999998 21.900000000000006 L17.100000000000023 6.0 L58.60000000000002 21.900000000000006 L135.0 21.900000000000006 A11 11 0 0 1 146.0 32.900000000000006 L146.0 64.30000000000001 A11 11 0 0 1 135.0 75.30000000000001 L23.0 75.30000000000001 A11 11 0 0 1 12.0 64.30000000000001 L12.0 32.900000000000006 A11 11 0 0 1 23.0 21.900000000000006 Z" transform="translate(3 4)" fill="#333" opacity="0.85" filter="url(#sc587.1)"/><path d="M23.0 21.900000000000006 L46.89999999999998 21.900000000000006 L17.100000000000023 6.0 L58.60000000000002 21.900000000000006 L135.0 21.900000000000006 A11 11 0 0 1 146.0 32.900000000000006 L146.0 64.30000000000001 A11 11 0 0 1 135.0 75.30000000000001 L23.0 75.30000000000001 A11 11 0 0 1 12.0 64.30000000000001 L12.0 32.900000000000006 A11 11 0 0 1 23.0 21.900000000000006 Z" fill="#a3b1c5"/><g clip-path="url(#kc587.1)"><path d="M23.0 25.050000000000004 L135.0 25.050000000000004 A7.85 7.85 0 0 1 142.85 32.900000000000006 L142.85 64.30000000000001 A7.85 7.85 0 0 1 135.0 72.15 L23.0 72.15 A7.85 7.85 0 0 1 15.15 64.30000000000001 L15.15 32.900000000000006 A7.85 7.85 0 0 1 23.0 25.050000000000004 Z" fill="#ffffff" filter="url(#bc587.1)"/><path d="M23.0 28.900000000000006 L135.0 28.900000000000006 A4 4 0 0 1 139.0 32.900000000000006 L139.0 64.30000000000001 A4 4 0 0 1 135.0 68.30000000000001 L23.0 68.30000000000001 A4 4 0 0 1 19.0 64.30000000000001 L19.0 32.900000000000006 A4 4 0 0 1 23.0 28.900000000000006 Z" fill="#dbe5f3" filter="url(#dc587.1)"/><path d="M25.75 10.98 L48.39999999999998 28.900000000000006 L56.10000000000002 28.900000000000006 Z" fill="#d4dfee" filter="url(#dc587.1)"/></g><path d="M23.0 21.900000000000006 L46.89999999999998 21.900000000000006 L17.100000000000023 6.0 L58.60000000000002 21.900000000000006 L135.0 21.900000000000006 A11 11 0 0 1 146.0 32.900000000000006 L146.0 64.30000000000001 A11 11 0 0 1 135.0 75.30000000000001 L23.0 75.30000000000001 A11 11 0 0 1 12.0 64.30000000000001 L12.0 32.900000000000006 A11 11 0 0 1 23.0 21.900000000000006 Z" fill="none" stroke="#8091a9" stroke-width="0.8"/></svg>
<div class="t" style="left:598.74px;top:187.52px;font-size:16px;color:#000;font-weight:normal;transform:scaleX(0.9612);transform-origin:0 0;">Delete this two</div>
<div class="t" style="left:599.70px;top:205.52px;font-size:16px;color:#000;font-weight:normal;transform:scaleX(0.9624);transform-origin:0 0;">folders too</div>
</body></html>
